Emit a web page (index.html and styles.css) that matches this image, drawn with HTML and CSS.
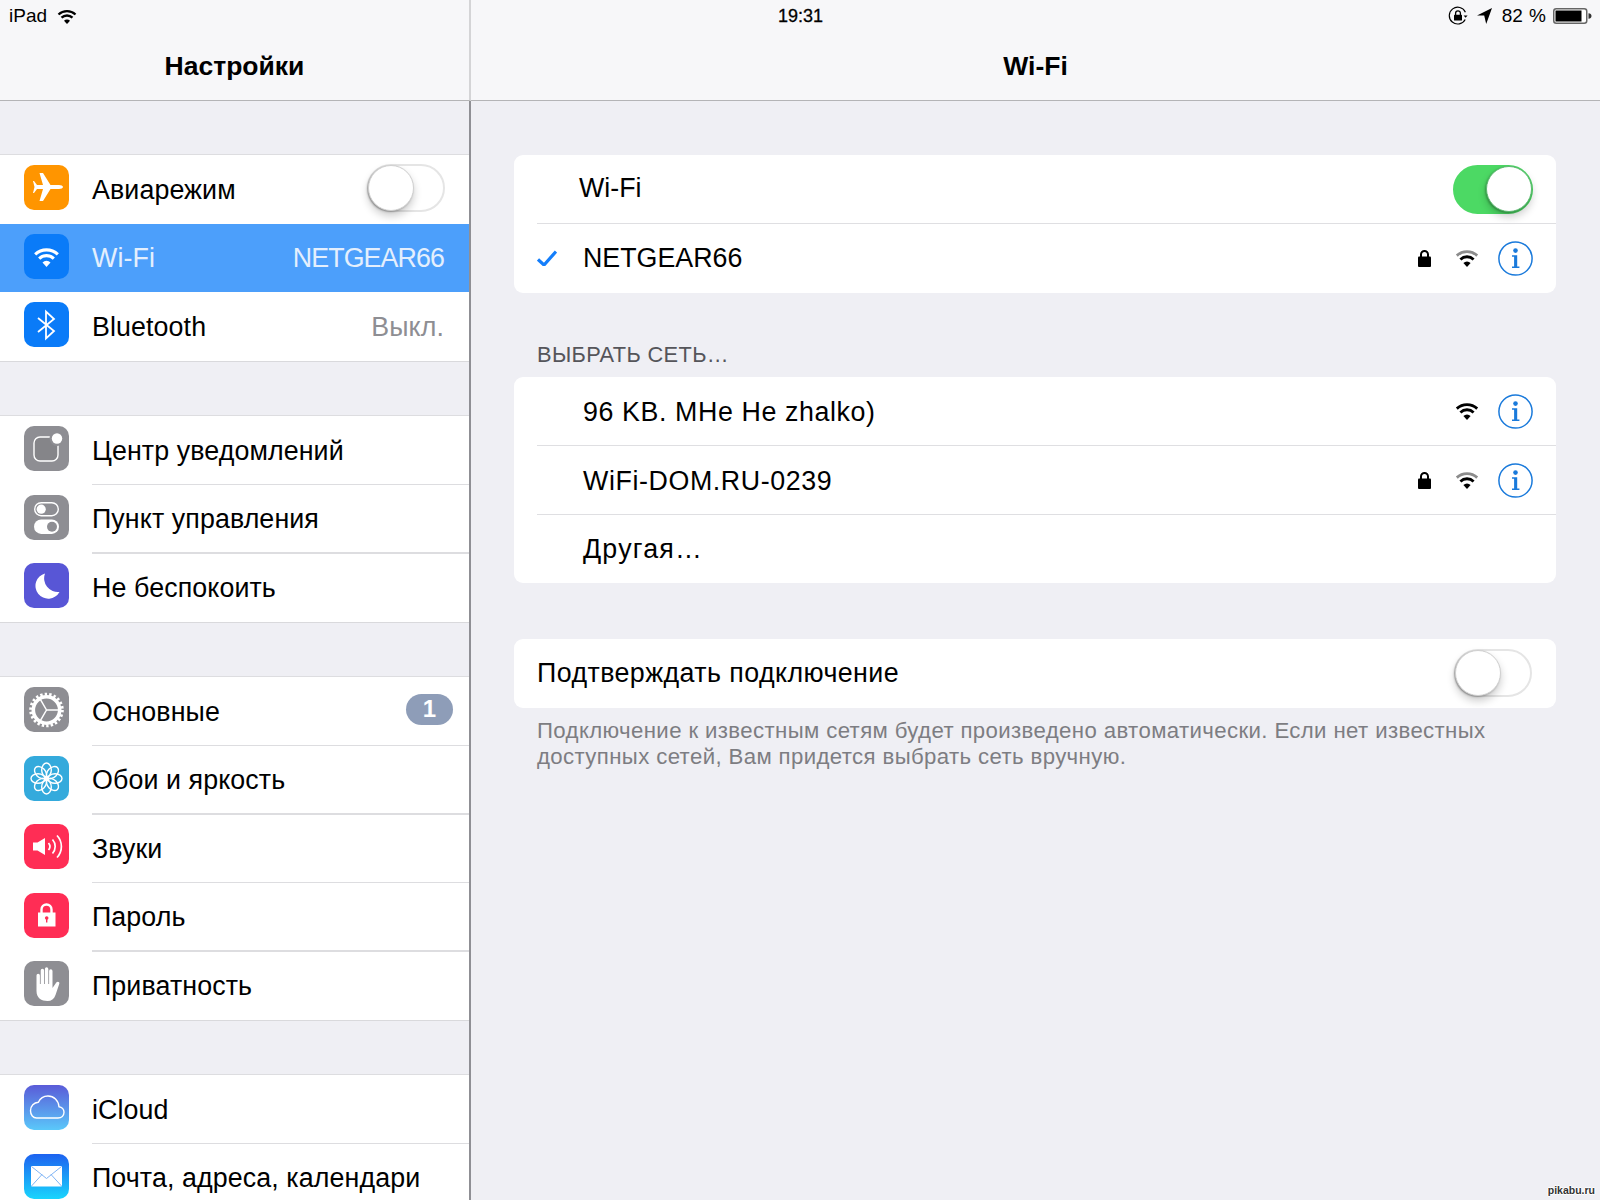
FILE: index.html
```html
<!DOCTYPE html>
<html lang="ru">
<head>
    <meta charset="UTF-8">
    <meta name="viewport" content="width=device-width, initial-scale=1.0">
    <title>Настройки — Wi-Fi</title>
    <link rel="stylesheet" href="styles.css">
</head>
<body>
    <svg class="defs" aria-hidden="true">
        <symbol id="wifi" viewBox="0 0 24 18">
            <path d="M1.8 6.6A15 15 0 0 1 22.2 6.6" fill="none" stroke="currentColor" stroke-width="2.8"/>
            <path d="M5.4 10.4A9.6 9.6 0 0 1 18.6 10.4" fill="none" stroke="currentColor" stroke-width="2.8"/>
            <path d="M12 18L8.4 14A5 5 0 0 1 15.6 14Z" fill="currentColor"/>
        </symbol>
        <symbol id="wifi-weak" viewBox="0 0 24 18">
            <path d="M1.8 6.6A15 15 0 0 1 22.2 6.6" fill="none" stroke="#8c8c8c" stroke-width="2.8"/>
            <path d="M5.4 10.4A9.6 9.6 0 0 1 18.6 10.4" fill="none" stroke="#000" stroke-width="2.8"/>
            <path d="M12 18L8.4 14A5 5 0 0 1 15.6 14Z" fill="#000"/>
        </symbol>
        <symbol id="lock" viewBox="0 0 13 18">
            <path d="M3 9V5.5a3.5 3.5 0 0 1 7 0V9" fill="none" stroke="#000" stroke-width="2"/>
            <rect x="0" y="7.5" width="13" height="10.5" rx="1" fill="#000"/>
        </symbol>
        <symbol id="info" viewBox="0 0 35 35">
            <circle cx="17.5" cy="17.5" r="16.6" fill="none" stroke="#1a7adb" stroke-width="1.5"/>
            <circle cx="17.5" cy="9.6" r="2.3" fill="#1a7adb"/>
            <path d="M14 14.2h5.2v11.3h2.2v1.6h-7.4v-1.6h2.1v-9.7H14z" fill="#1a7adb"/>
        </symbol>
    </svg>

    <div class="status-bar">
        <div class="status-left">
            <span>iPad</span>
            <svg class="status-wifi"><use href="#wifi"/></svg>
        </div>
        <div class="status-time">19:31</div>
        <div class="status-right">
            <svg class="status-rotate" viewBox="0 0 20 20">
                <path d="M17.2 13.4A8.4 8.4 0 1 1 17.4 6.2" fill="none" stroke="#000" stroke-width="1.2"/>
                <path d="M15.6 9.4h4l-2 2.4z" fill="#000"/>
                <path d="M7.6 9V7.2a2.4 2.4 0 0 1 4.8 0V9" fill="none" stroke="#000" stroke-width="1.3"/>
                <rect x="6" y="8.8" width="8" height="5.8" rx=".6" fill="#000"/>
            </svg>
            <svg class="status-arrow" viewBox="0 0 15 16">
                <path d="M15 0L0 7.6h7.2L9.2 16z" fill="#000"/>
            </svg>
            <span>82 %</span>
            <svg class="status-battery" viewBox="0 0 39 16">
                <rect x=".75" y=".75" width="33" height="14.5" rx="2.5" fill="#fff" stroke="#666" stroke-width="1.5"/>
                <rect x="2.5" y="2.5" width="26" height="11" fill="#000"/>
                <path d="M35.5 5.2c1.8 0 3 1.2 3 2.8s-1.2 2.8-3 2.8z" fill="#333"/>
            </svg>
        </div>
    </div>

    <div class="page">
        <aside class="sidebar">
            <header class="nav-bar"><h1>Настройки</h1></header>
            <div class="sidebar-body">
                <div class="group">
                    <div class="row">
                        <span class="icon orange">
                            <svg viewBox="0 0 45 45"><path d="M39 22c0-1.300-2-2-4-2h-8.500L19 8h-3.500L19 20h-6l-3-4H9l1.500 6L9 28h1l3-4h6l-3.500 12H19l7.500-12H35c2 0 4-.7 4-2z" fill="#fff"/></svg>
                        </span>
                        <span class="label">Авиарежим</span>
                        <span class="toggle"><span class="knob"></span></span>
                    </div>
                    <div class="row selected">
                        <span class="icon blue">
                            <svg viewBox="0 0 45 45"><use href="#wifi" x="9" y="13" width="27" height="20"/></svg>
                        </span>
                        <span class="label">Wi-Fi</span>
                        <span class="value narrow">NETGEAR66</span>
                    </div>
                    <div class="row">
                        <span class="icon blue">
                            <svg viewBox="0 0 45 45"><path d="M14 16l16 13-8 7.500v-27l8 7.500-16 13" fill="none" stroke="#fff" stroke-width="1.800"/></svg>
                        </span>
                        <span class="label">Bluetooth</span>
                        <span class="value muted">Выкл.</span>
                    </div>
                </div>

                <div class="group">
                    <div class="row">
                        <span class="icon gray">
                            <svg viewBox="0 0 45 45">
                                <rect x="10" y="11" width="24" height="24" rx="6" fill="#858589" stroke="#fff" stroke-width="1.4"/>
                                <circle cx="33" cy="12.5" r="7.5" fill="#8e8e93"/>
                                <circle cx="33" cy="12.5" r="5.2" fill="#fff"/>
                            </svg>
                        </span>
                        <span class="label">Центр уведомлений</span>
                    </div>
                    <div class="row">
                        <span class="icon gray">
                            <svg viewBox="0 0 45 45">
                                <rect x="10.7" y="7.7" width="23.6" height="13" rx="6.5" fill="none" stroke="#fff" stroke-width="1.4"/>
                                <circle cx="17.2" cy="14.2" r="4.6" fill="#fff"/>
                                <rect x="10" y="24.500" width="25" height="14.400" rx="7.200" fill="#fff"/>
                                <circle cx="28" cy="31.700" r="5" fill="#8e8e93"/>
                            </svg>
                        </span>
                        <span class="label">Пункт управления</span>
                    </div>
                    <div class="row">
                        <span class="icon purple">
                            <svg viewBox="0 0 45 45"><path d="M21 10.500A12.800 12.800 0 1 0 35.500 29 13.800 13.800 0 0 1 21 10.500z" fill="#fff"/></svg>
                        </span>
                        <span class="label">Не беспокоить</span>
                    </div>
                </div>

                <div class="group">
                    <div class="row">
                        <span class="icon gray">
                            <svg viewBox="0 0 45 45">
                                <circle cx="22.500" cy="23" r="15.800" fill="none" stroke="#fff" stroke-width="3" stroke-dasharray="2.400 2.110"/>
                                <circle cx="22.500" cy="23" r="13.200" fill="none" stroke="#fff" stroke-width="3.600"/>
                                <path d="M22.500 23L16.500 12.600M22.500 23H34.500M22.500 23L16.500 33.400" fill="none" stroke="#fff" stroke-width="1.500"/>
                            </svg>
                        </span>
                        <span class="label">Основные</span>
                        <span class="badge">1</span>
                    </div>
                    <div class="row">
                        <span class="icon sky">
                            <svg viewBox="0 0 45 45">
                                <g fill="none" stroke="#fff" stroke-width="1.400">
                                    <ellipse cx="22.500" cy="14" rx="4.800" ry="7"/>
                                    <ellipse cx="22.500" cy="14" rx="4.800" ry="7" transform="rotate(45 22.500 22.500)"/>
                                    <ellipse cx="22.500" cy="14" rx="4.800" ry="7" transform="rotate(90 22.500 22.500)"/>
                                    <ellipse cx="22.500" cy="14" rx="4.800" ry="7" transform="rotate(135 22.500 22.500)"/>
                                    <ellipse cx="22.500" cy="14" rx="4.800" ry="7" transform="rotate(180 22.500 22.500)"/>
                                    <ellipse cx="22.500" cy="14" rx="4.800" ry="7" transform="rotate(225 22.500 22.500)"/>
                                    <ellipse cx="22.500" cy="14" rx="4.800" ry="7" transform="rotate(270 22.500 22.500)"/>
                                    <ellipse cx="22.500" cy="14" rx="4.800" ry="7" transform="rotate(315 22.500 22.500)"/>
                                </g>
                                <circle cx="22.500" cy="22.500" r="2.200" fill="#fff"/>
                            </svg>
                        </span>
                        <span class="label">Обои и яркость</span>
                    </div>
                    <div class="row">
                        <span class="icon pink">
                            <svg viewBox="0 0 45 45">
                                <path d="M9 18.500h4.500l7.500-4.500v17l-7.500-4.500H9z" fill="#fff"/>
                                <g fill="none" stroke="#fff" stroke-width="1.700">
                                    <path d="M24.500 19a5.500 5.500 0 0 1 0 7"/>
                                    <path d="M28.500 15.500a10.500 10.500 0 0 1 0 14"/>
                                    <path d="M33 11.500a16 16 0 0 1 0 22"/>
                                </g>
                            </svg>
                        </span>
                        <span class="label">Звуки</span>
                    </div>
                    <div class="row">
                        <span class="icon pink">
                            <svg viewBox="0 0 45 45">
                                <path d="M17.500 20v-3.500a5 5 0 0 1 10 0V20" fill="none" stroke="#fff" stroke-width="2.400"/>
                                <rect x="14" y="19.500" width="17.500" height="14" fill="#fff"/>
                                <circle cx="22.700" cy="25" r="1.800" fill="#ff2d55"/>
                                <rect x="22" y="25" width="1.400" height="4.500" fill="#ff2d55"/>
                            </svg>
                        </span>
                        <span class="label">Пароль</span>
                    </div>
                    <div class="row">
                        <span class="icon gray">
                            <svg viewBox="0 0 45 45">
                                <path d="M12.500 14.500a1.700 1.700 0 0 1 3.400 0V23h.8V9.500a1.700 1.700 0 0 1 3.400 0V23h.8V8a1.700 1.700 0 0 1 3.400 0v15h.8V10a1.700 1.700 0 0 1 3.400 0v17l3.800-5.500c1.200-1.600 3.600-.6 3 1.200L31.500 34c-1.500 4-4 6-8 6-6 0-11-3-11-10z" fill="#fff"/>
                            </svg>
                        </span>
                        <span class="label">Приватность</span>
                    </div>
                </div>

                <div class="group">
                    <div class="row">
                        <span class="icon cloud">
                            <svg viewBox="0 0 45 45"><path d="M12.500 33h21.500c3.400 0 6-2.400 6-5.700 0-3-2.200-5.300-5-5.600C34.500 15.500 29.800 11 24 11c-4.400 0-8 2.600-9.600 6.200C10 17.500 6.500 21 6.500 25.800c0 4.200 2.700 7.200 6 7.200z" fill="none" stroke="#fff" stroke-width="1.400"/></svg>
                        </span>
                        <span class="label">iCloud</span>
                    </div>
                    <div class="row">
                        <span class="icon mail">
                            <svg viewBox="0 0 45 45">
                                <rect x="7" y="12" width="31" height="20.500" rx="1" fill="#fff"/>
                                <path d="M7.500 12.500L22.500 24.500 37.500 12.500M7.500 32L18 20.500M37.500 32L27 20.500" fill="none" stroke="#7fb4f5" stroke-width="1"/>
                            </svg>
                        </span>
                        <span class="label">Почта, адреса, календари</span>
                    </div>
                </div>
            </div>
        </aside>

        <main class="detail">
            <header class="nav-bar"><h1>Wi-Fi</h1></header>
            <div class="detail-body">
                <section class="card">
                    <div class="card-row">
                        <span class="net-name raised">Wi-Fi</span>
                        <span class="toggle on"><span class="knob"></span></span>
                    </div>
                    <div class="card-row">
                        <svg class="check" viewBox="0 0 20 16"><path d="M1 9.500l6 5.500L19 1.500" fill="none" stroke="#147efb" stroke-width="3.200"/></svg>
                        <span class="net-name current">NETGEAR66</span>
                        <svg class="lock"><use href="#lock"/></svg>
                        <svg class="wifi"><use href="#wifi-weak"/></svg>
                        <svg class="info"><use href="#info"/></svg>
                    </div>
                </section>

                <h2 class="section-title">ВЫБРАТЬ СЕТЬ…</h2>
                <section class="card">
                    <div class="card-row">
                        <span class="net-name">96 KB. MHe He zhalko)</span>
                        <svg class="wifi"><use href="#wifi"/></svg>
                        <svg class="info"><use href="#info"/></svg>
                    </div>
                    <div class="card-row">
                        <span class="net-name">WiFi-DOM.RU-0239</span>
                        <svg class="lock"><use href="#lock"/></svg>
                        <svg class="wifi"><use href="#wifi-weak"/></svg>
                        <svg class="info"><use href="#info"/></svg>
                    </div>
                    <div class="card-row">
                        <span class="net-name other">Другая…</span>
                    </div>
                </section>

                <section class="card spaced">
                    <div class="card-row">
                        <span class="ask-label">Подтверждать подключение</span>
                        <span class="toggle"><span class="knob"></span></span>
                    </div>
                </section>
                <p class="note">Подключение к известным сетям будет произведено автоматически. Если нет известных доступных сетей, Вам придется выбрать сеть вручную.</p>
            </div>
        </main>
    </div>

    <div class="watermark">pikabu.ru</div>
</body>
</html>
```

FILE: styles.css
```css
* {
    box-sizing: border-box;
}
html, body {
    margin: 0;
    padding: 0;
    height: 1200px;
    overflow: hidden;
}
body {
    font-family: "Liberation Sans", Arial, sans-serif;
    color: #000;
    background-color: #efeff4;
    position: relative;
}
.defs {
    width: 0;
    height: 0;
    position: absolute;
}

/* status bar lies over both nav bars */
.status-bar {
    position: absolute;
    top: 0;
    left: 0;
    width: 100%;
    height: 32px;
    padding: 0 8px 0 9px;
    display: flex;
    align-items: center;
    font-size: 19px;
}
.status-left, .status-right {
    flex: 1;
    display: flex;
    align-items: center;
}
.status-right {
    justify-content: flex-end;
}
.status-time {
    font-size: 18px;
    -webkit-text-stroke: 0.3px #000;
}
.status-wifi {
    width: 20px;
    height: 15px;
    margin-left: 10px;
    color: #000;
}
.status-rotate {
    width: 20px;
    height: 20px;
}
.status-arrow {
    width: 15px;
    height: 16px;
    margin-left: 9px;
}
.status-right span {
    margin-left: 10px;
    word-spacing: 1px;
}
.status-battery {
    width: 39px;
    height: 16px;
    margin-left: 7px;
}

.page {
    display: flex;
    height: 1200px;
}
.sidebar {
    width: 471px;
    flex-shrink: 0;
    display: flex;
    flex-direction: column;
    border-right: 2px solid #8f8f94;
}
.detail {
    flex: 1;
    display: flex;
    flex-direction: column;
}
.nav-bar {
    height: 101px;
    flex-shrink: 0;
    padding-top: 32px;
    background-color: #f7f7f9;
    border-bottom: 1px solid #b4b4b6;
    display: flex;
    align-items: center;
    justify-content: center;
}
.nav-bar h1 {
    margin: 0;
    font-size: 26.500px;
    font-weight: 700;
}
.sidebar .nav-bar {
    margin-right: -2px;
    border-right: 2px solid #d4d4d6;
}

.sidebar-body {
    padding-top: 54px;
    overflow: hidden;
}
.group {
    background-color: #fff;
    box-shadow: 0 -1px 0 #dddde0, 0 1px 0 #d9d9dc;
    margin-bottom: 55.500px;
}
.row {
    height: 68.500px;
    display: flex;
    align-items: center;
    padding: 0 25px 0 23.500px;
    position: relative;
    font-size: 26.800px;
    letter-spacing: 0.1px;
}
.row + .row::before {
    content: "";
    position: absolute;
    top: -1px;
    left: 92px;
    right: 0;
    height: 1.500px;
    background-color: #dddde0;
}
.row.selected {
    background-color: #4c9ffb;
    color: #e4effd;
}
.row.selected::before, .row.selected + .row::before {
    display: none;
}
.icon {
    width: 45px;
    height: 45px;
    border-radius: 10px;
    flex-shrink: 0;
    margin: 0 23.500px 3px 0;
}
.icon svg {
    display: block;
    width: 45px;
    height: 45px;
}
.selected .icon svg {
    color: #fff;
}
.orange { background-color: #ff9500; }
.blue { background-color: #0a7bf8; }
.gray { background-color: #8e8e93; }
.purple { background-color: #5856d6; }
.sky { background-color: #34aadc; }
.pink { background-color: #ff2d55; }
.cloud { background-image: linear-gradient(#5a5bd8, #5ac8fa); }
.mail { background-image: linear-gradient(#1d62f0, #19d5fd); }
.label {
    flex: 1;
    padding-top: 2px;
}
.value {
    padding-top: 2px;
    color: #e4effd;
}
.value.narrow {
    letter-spacing: -0.9px;
}
.value.muted {
    color: #8e8e93;
}
.badge {
    width: 47px;
    height: 31px;
    margin: -4px -9px 0 0;
    border-radius: 16px;
    background-color: #8e9db8;
    color: #fff;
    font-size: 24px;
    font-weight: 700;
    line-height: 30px;
    text-align: center;
}

/* switches */
.toggle {
    width: 78px;
    height: 48px;
    border: 2px solid #e5e5e5;
    border-radius: 24px;
    background-color: #fff;
    position: relative;
    display: block;
    flex-shrink: 0;
}
.row .toggle {
    margin: -2px -1px 0 0;
}
.knob {
    position: absolute;
    top: -1px;
    left: -1px;
    width: 46px;
    height: 46px;
    border-radius: 50%;
    background-color: #fff;
    border: 1px solid #d0d0d0;
    box-shadow: 0 5px 8px rgba(0, 0, 0, 0.2), -1px 1px 2px rgba(0, 0, 0, 0.25);
}
.toggle.on {
    width: 80px;
    height: 49px;
    background-color: #4cd964;
    border-color: #4cd964;
    border-radius: 25px;
}
.toggle.on .knob {
    left: auto;
    right: -1px;
    border-color: #5cb870;
}
.card-row .toggle {
    margin-right: 1px;
}
.card-row .toggle.on {
    margin-right: 0;
}

.detail-body {
    padding: 54px 44px 0 43px;
}
.card {
    background-color: #fff;
    border-radius: 9px;
    overflow: hidden;
}
.card.spaced {
    margin-top: 55.500px;
}
.card-row {
    height: 68.750px;
    display: flex;
    align-items: center;
    padding: 0 23px;
    position: relative;
    font-size: 26.800px;
}
.card-row + .card-row::before {
    content: "";
    position: absolute;
    top: -1px;
    left: 23px;
    right: 0;
    height: 1.500px;
    background-color: #dfdfe2;
}
.net-name {
    flex: 1;
    padding: 2px 0 0 46px;
    letter-spacing: 0.6px;
}
.net-name.other {
    letter-spacing: 1.200px;
}
.net-name.current {
    padding: 0 0 0 26px;
    letter-spacing: 0;
}
.raised {
    position: relative;
    top: -1px;
    padding: 0 0 0 42px;
    letter-spacing: 0;
}
.ask-label {
    flex: 1;
    letter-spacing: 0.42px;
}
.check {
    width: 20px;
    height: 16px;
}
.lock {
    width: 13px;
    height: 18px;
    margin-right: 24px;
}
.wifi {
    width: 24px;
    height: 18px;
    margin-right: 19px;
    color: #000;
}
.info {
    width: 35px;
    height: 35px;
}
.section-title {
    margin: 49px 0 0;
    padding-left: 23px;
    height: 35.500px;
    font-size: 21.800px;
    font-weight: 400;
    line-height: 25px;
    letter-spacing: 0.35px;
    color: #55555a;
}
.note {
    margin: 10px 0 0;
    padding: 0 23px;
    font-size: 22.200px;
    line-height: 26px;
    letter-spacing: 0.38px;
    color: #7d7d82;
}

.watermark {
    position: absolute;
    right: 5px;
    bottom: 4px;
    font-size: 10.500px;
    font-weight: 700;
    color: #333;
    text-shadow: 1px 0 0 #fff, -1px 0 0 #fff, 0 1px 0 #fff, 0 -1px 0 #fff;
}
```
